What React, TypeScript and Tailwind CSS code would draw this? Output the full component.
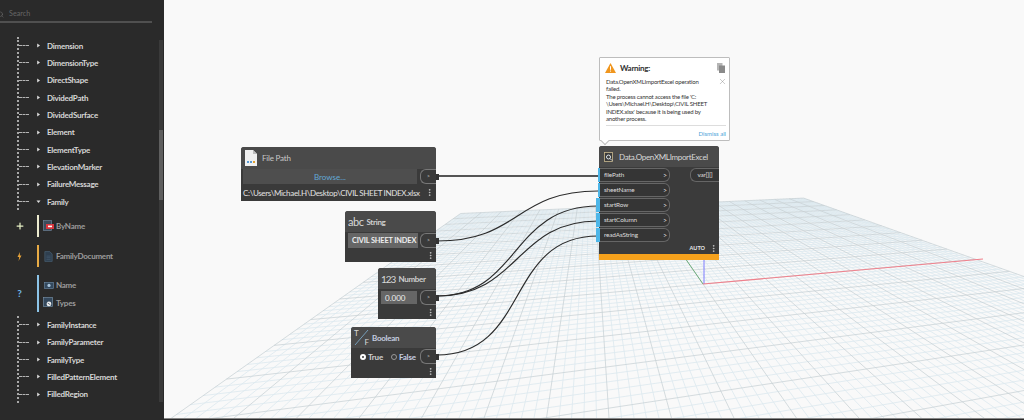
import { X, Plus, MoreVertical, Search } from "lucide-react";
import type { ReactNode } from "react";

// ground plane: square (-1..1) projected with two vanishing points
const VP_X = [2490, 122];
const VP_Y = [590, 122];
const ORIGIN = [703, 284];
const W1 = 0.18;
const W2 = 0.95;

function project(x: number, y: number) {
  const a = W1 * x;
  const b = W2 * y;
  const d = 1 + a + b;
  return [
    (a * VP_X[0] + b * VP_Y[0] + ORIGIN[0]) / d,
    (a * VP_X[1] + b * VP_Y[1] + ORIGIN[1]) / d,
  ];
}

function gridLines(major: boolean) {
  const out: string[] = [];
  const cutoff = -0.5;
  for (let i = -50; i <= 50; i++) {
    const isMajor = i % 5 === 0;
    if (isMajor !== major) continue;
    const t = i / 50;
    const y0 = Math.max(-1, (cutoff - W1 * t) / W2);
    const p = project(t, y0);
    const q = project(t, 1);
    out.push(`M${p[0].toFixed(1)} ${p[1].toFixed(1)}L${q[0].toFixed(1)} ${q[1].toFixed(1)}`);
    const x0 = Math.max(-1, (cutoff - W2 * t) / W1);
    if (x0 < 1) {
      const r = project(x0, t);
      const s = project(1, t);
      out.push(`M${r[0].toFixed(1)} ${r[1].toFixed(1)}L${s[0].toFixed(1)} ${s[1].toFixed(1)}`);
    }
  }
  return out.join("");
}

function Ground() {
  return (
    <svg className="absolute left-0 top-0" width={860} height={420} viewBox="164 0 860 420">
      <path d={gridLines(false)} stroke="#dce9ef" strokeWidth={0.8} fill="none" />
      <path d={gridLines(true)} stroke="#c4ced3" strokeWidth={0.7} fill="none" />
      <path d="M703 284L685 258" stroke="#6fae7c" strokeWidth={1} />
      <path d="M704 284L704 258" stroke="#7d7dff" strokeWidth={1} />
      <path d="M703 284L983 259" stroke="#f0808c" strokeWidth={1.2} />
      <path d="M437 176L598 176" stroke="#555555" strokeWidth={2} fill="none" />
      <path d="M437 241C520 241 515 191 598 191" stroke="#2b2b2b" strokeWidth={1.2} fill="none" />
      <path d="M437 296C520 296 510 206 598 206" stroke="#2b2b2b" strokeWidth={1.2} fill="none" />
      <path d="M437 296C520 296 515 221 598 221" stroke="#2b2b2b" strokeWidth={1.2} fill="none" />
      <path d="M437 355C530 355 505 236 598 236" stroke="#2b2b2b" strokeWidth={1.2} fill="none" />
    </svg>
  );
}

function Caret({ open }: { open?: boolean }) {
  return (
    <svg width="5" height="5" viewBox="0 0 5 5" className="shrink-0">
      {open ? <path d="M0.5 1.5H4.5L2.5 4Z" fill="#ddd" /> : <path d="M1.2 0.5V4.5L4 2.5Z" fill="#ddd" />}
    </svg>
  );
}

function TreeRow({ label, open }: { label: string; open?: boolean }) {
  return (
    <div className="flex h-[17.33px] items-center">
      <div className="w-[10px] border-t border-dashed border-[#b5b5b5]" />
      <div className="ml-[7px] mr-[6px] flex w-[5px]">
        <Caret open={open} />
      </div>
      <span className="text-[8px] font-bold tracking-[-0.25px] text-[#d6d6d6]">{label}</span>
    </div>
  );
}

function Tree({ items, openLast }: { items: string[]; openLast?: boolean }) {
  return (
    <div className="ml-[17px] border-l-2 border-dotted border-[#a8a8a8]">
      {items.map((it, i) => (
        <TreeRow key={it} label={it} open={openLast && i === items.length - 1} />
      ))}
    </div>
  );
}

function MethodRow({ icon, label }: { icon: ReactNode; label: string }) {
  return (
    <div className="flex h-[18px] items-center gap-[1px]">
      <div className="flex w-[13px] justify-center">{icon}</div>
      <span className="text-[8px] font-bold tracking-[-0.25px] text-[#9c9c9c]">{label}</span>
    </div>
  );
}

function MethodGroup({
  symbol,
  bar,
  height,
  children,
}: {
  symbol: ReactNode;
  bar: string;
  height: string;
  children: ReactNode;
}) {
  return (
    <div className={`flex items-center ${height}`}>
      <div className="flex w-[37px] justify-center pl-[2px]">{symbol}</div>
      <div className={`flex h-full w-[2px] ${bar}`} />
      <div className="flex flex-col pl-[3px]">{children}</div>
    </div>
  );
}

function ByNameIcon() {
  return (
    <svg width="12" height="12" viewBox="0 0 12 12">
      <rect x="0.5" y="0.5" width="8" height="10" fill="#3b4c5c" stroke="#6d8296" strokeWidth="0.7" />
      <rect x="3" y="4" width="8" height="5" fill="#d9363e" />
      <rect x="5" y="5.6" width="4" height="1.6" fill="#fff" />
    </svg>
  );
}

function DocIcon() {
  return (
    <svg width="9" height="11" viewBox="0 0 11 13">
      <path d="M1 .5H7L10 3.5V12.5H1Z" fill="#2f3f4f" stroke="#4a6278" strokeWidth="0.8" />
      <path d="M3 6H8M3 8H8M3 10H8" stroke="#4a6278" strokeWidth="0.7" />
    </svg>
  );
}

function NameIcon() {
  return (
    <svg width="10" height="8" viewBox="0 0 11 9">
      <rect x="0.5" y="1.5" width="10" height="7" fill="#33495e" stroke="#6d8ba6" strokeWidth="0.7" />
      <circle cx="5.5" cy="5" r="1.8" fill="#a9c4dc" />
    </svg>
  );
}

function TypesIcon() {
  return (
    <svg width="11" height="11" viewBox="0 0 12 12">
      <rect x="0.5" y="0.5" width="10" height="10" fill="#34485c" stroke="#7891a8" strokeWidth="0.7" />
      <circle cx="6.5" cy="7.5" r="2.6" fill="#eeeeee" />
      <path d="M5 6.5L8 8.5" stroke="#34485c" strokeWidth="0.8" />
    </svg>
  );
}

function Sidebar() {
  return (
    <aside className="relative flex h-full w-[164px] shrink-0 flex-col bg-[#2a2a2a]">
      <div className="mr-[12px] flex h-[23px] items-center border-b-2 border-[#505050] pt-[8px]">
        <Search size={7} strokeWidth={1.5} className="-ml-[3px] text-[#7a7a7a]" />
        <span className="ml-[5px] text-[7.2px] text-[#666666]">Search</span>
      </div>
      <div className="pt-[14px]">
        <Tree
          openLast
          items={[
            "Dimension",
            "DimensionType",
            "DirectShape",
            "DividedPath",
            "DividedSurface",
            "Element",
            "ElementType",
            "ElevationMarker",
            "FailureMessage",
            "Family",
          ]}
        />
      </div>
      <div className="flex flex-col gap-[8px] pt-[5px]">
        <MethodGroup
          bar="bg-[#ecebcf]"
          height="h-[22px]"
          symbol={<Plus size={10} strokeWidth={3} className="text-[#e6efc4]" />}
        >
          <MethodRow icon={<ByNameIcon />} label="ByName" />
        </MethodGroup>
        <MethodGroup
          bar="bg-[#e8ab45]"
          height="h-[22px]"
          symbol={
            <svg width="5" height="9" viewBox="0 0 5 9">
              <path d="M3 0L0.5 5H2.2L1.6 9L4.5 3.6H2.8Z" fill="#e8a43a" />
            </svg>
          }
        >
          <MethodRow icon={<DocIcon />} label="FamilyDocument" />
        </MethodGroup>
        <MethodGroup
          bar="bg-[#8cc4e8]"
          height="h-[37px]"
          symbol={<span className="text-[10px] font-bold text-[#6fb6e6]">?</span>}
        >
          <MethodRow icon={<NameIcon />} label="Name" />
          <MethodRow icon={<TypesIcon />} label="Types" />
        </MethodGroup>
      </div>
      <div className="pt-[4px]">
        <Tree items={["FamilyInstance", "FamilyParameter", "FamilyType", "FilledPatternElement", "FilledRegion"]} />
      </div>
      {/* scrollbar */}
      <div className="absolute bottom-[18px] right-[1px] top-[40px] w-[4px] bg-[#3a3a3a]">
        <div className="mt-[90px] h-[70px] w-full bg-[#5f5f5f]" />
      </div>
    </aside>
  );
}

function OutPort() {
  return (
    <div className="relative flex h-[15px] w-[16px] shrink-0 items-center justify-center rounded-l-[6px] border border-r-0 border-[#777777] bg-[#3a3a3a] text-[5px] text-[#cccccc]">
      &gt;
      <div className="absolute right-[-3px] top-[4px] h-[6px] w-[3px] bg-[#333333]" />
    </div>
  );
}

function Dots() {
  return <MoreVertical size={9} strokeWidth={2} className="shrink-0 text-[#cfcfcf]" />;
}

function FilePathNode() {
  return (
    <div className="absolute left-[77px] top-[147px] flex h-[54px] w-[195px] flex-col rounded-t-[3px] bg-[#3a3a3a]">
      <div className="flex h-[22px] items-center gap-[5px] rounded-t-[3px] bg-[#4a4a4a] pl-[4px]">
        <svg width="12" height="16" viewBox="0 0 12 16">
          <path d="M0 0H8L12 4V16H0Z" fill="#f0f0f0" />
          <path d="M8 0L12 4H8Z" fill="#bdbdbd" />
          <rect x="2" y="11" width="2" height="2" fill="#5a9bd5" />
          <rect x="5" y="11" width="2" height="2" fill="#5a9bd5" />
          <rect x="8" y="11" width="2" height="2" fill="#e0a030" />
        </svg>
        <span className="text-[8px] tracking-[-0.2px] text-[#c8c8c8]">File Path</span>
      </div>
      <div className="flex h-[15px] items-center pl-[2px]">
        <div className="flex h-[15px] w-[174px] items-center justify-center bg-[#4e4e4e] text-[8px] text-[#63a9d6]">
          Browse...
        </div>
        <div className="ml-auto">
          <OutPort />
        </div>
      </div>
      <div className="flex flex-1 items-center justify-between pl-[2px] pr-[2px]">
        <span className="whitespace-nowrap text-[8px] tracking-[-0.33px] text-[#e2e2e2]">C:\Users\Michael.H\Desktop\CIVIL SHEET INDEX.xlsx</span>
        <Dots />
      </div>
    </div>
  );
}

function InputNode({
  pos,
  icon,
  title,
  titleClass,
  children,
}: {
  pos: string;
  icon: ReactNode;
  title: string;
  titleClass?: string;
  children: ReactNode;
}) {
  return (
    <div className={`absolute flex h-[51px] flex-col rounded-t-[3px] bg-[#3a3a3a] ${pos}`}>
      <div className="flex h-[21px] items-center gap-[3px] rounded-t-[3px] bg-[#4a4a4a] pl-[3px]">
        {icon}
        <span className={`text-[8px] font-bold tracking-[-0.3px] ${titleClass ?? "text-[#cfcfcf]"}`}>{title}</span>
      </div>
      <div className="flex h-[16px] items-center justify-between pl-[3px] pt-[1px]">
        {children}
        <OutPort />
      </div>
      <div className="flex flex-1 items-center justify-end pr-[1px]">
        <Dots />
      </div>
    </div>
  );
}

function InPort({ label, wide }: { label: string; wide?: boolean }) {
  return (
    <div className="relative h-[15px]">
      <div className="flex h-[14px] w-[71px] items-center justify-between rounded-r-[6px] border border-l-0 border-[#666666] bg-[#353535] pl-[5px] pr-[2px] text-[6.4px] tracking-[-0.15px] text-[#dddddd]">
        <span>{label}</span>
        <span className="text-[7px]">&gt;</span>
      </div>
      <div className={`absolute bottom-[1px] right-[70px] top-0 bg-[#4db6e8] ${wide ? "w-[4px]" : "w-[2px]"}`} />
    </div>
  );
}

function ImportNode() {
  return (
    <div className="absolute left-[435px] top-[146px] flex h-[114px] w-[120px] flex-col rounded-t-[3px] bg-[#3b3b3b]">
      <div className="flex h-[21px] items-center gap-[6px] rounded-t-[3px] bg-[#4a4a4a] pl-[5px]">
        <svg width="9" height="10" viewBox="0 0 9 10" className="shrink-0">
          <rect x="0.5" y="0.5" width="8" height="9" fill="#3a3a3a" stroke="#c9b88f" strokeWidth="0.8" />
          <circle cx="4.5" cy="5" r="2" fill="none" stroke="#dfe8ef" strokeWidth="1" />
          <path d="M6 6.5L8 8.5" stroke="#dfe8ef" strokeWidth="1" />
        </svg>
        <span className="text-[8px] tracking-[-0.33px] text-[#d8d8d8]">Data.OpenXMLImportExcel</span>
      </div>
      <div className="flex items-start justify-between pt-[1px]">
        <div className="flex flex-col">
          <InPort label="filePath" />
          <InPort label="sheetName" />
          <InPort label="startRow" wide />
          <InPort label="startColumn" wide />
          <InPort label="readAsString" wide />
        </div>
        <div className="flex h-[14px] w-[29px] items-center justify-center rounded-l-[6px] border border-r-0 border-[#666666] bg-[#353535] text-[6.4px] tracking-[-0.2px] text-[#dddddd]">
          var[][]
        </div>
      </div>
      <div className="flex flex-1 items-center justify-end gap-[4px] pr-[1px]">
        <span className="text-[5.5px] font-bold text-[#e8e8e8]">AUTO</span>
        <Dots />
      </div>
      <div className="h-[6px] bg-[#f5a11c]" />
    </div>
  );
}

function WarningBubble() {
  return (
    <div className="absolute left-[435px] top-[57px] flex h-[84px] w-[131px] flex-col rounded-[1px] border border-[#bdbdbd] bg-white px-[6px]">
      <div className="flex h-[20px] items-center">
        <svg width="11" height="10" viewBox="0 0 11 10" className="-ml-[1px]">
          <path d="M5.5 0L11 10H0Z" fill="#f0961e" />
          <rect x="5" y="3.2" width="1" height="3.6" fill="#fff" />
          <rect x="5" y="7.6" width="1" height="1" fill="#fff" />
        </svg>
        <span className="ml-[4px] text-[8px] font-bold tracking-[-0.3px] text-[#333333]">Warning:</span>
        <svg width="8" height="10" viewBox="0 0 8 10" className="ml-auto mr-[-2px]">
          <rect x="0" y="0" width="5.5" height="7.5" fill="#b5b5b5" />
          <rect x="2" y="2.5" width="6" height="7.5" fill="#8a8a8a" />
        </svg>
      </div>
      <div className="relative h-[44px]">
        <p className="whitespace-nowrap text-[6px] leading-[7.4px] tracking-[-0.2px] text-[#333333]">
          Data.OpenXMLImportExcel operation
          <br />
          failed.
          <br />
          The process cannot access the file 'C:
          <br />
          \Users\Michael.H\Desktop\CIVIL SHEET
          <br />
          INDEX.xlsx' because it is being used by
          <br />
          another process.
        </p>
        <X size={9} strokeWidth={1} className="absolute right-[-4px] top-[-1px] text-[#777777]" />
      </div>
      <div className="mr-[-3px] mt-[3px] flex flex-1 items-center justify-end border-t border-[#dddddd] text-[6px] text-[#4ba3d8]">
        Dismiss all
      </div>
      <div className="absolute bottom-[-4px] left-[2px] h-[6px] w-[6px] rotate-45 border-b border-r border-[#bdbdbd] bg-white" />
    </div>
  );
}

function Canvas() {
  return (
    <main className="relative h-full flex-1 overflow-hidden bg-[#f9f9f9]">
      <Ground />
      <FilePathNode />
      <InputNode
        pos="left-[181px] top-[211px] w-[91px]"
        title="String"
        icon={<span className="text-[11px] leading-none tracking-[-0.5px] text-[#d8d8d8]">abc</span>}
      >
        <div className="flex h-[15px] w-[70px] items-center overflow-hidden whitespace-nowrap bg-[#666666] pl-[4px] text-[7.4px] font-bold tracking-[-0.15px] text-[#eeeeee]">
          CIVIL SHEET INDEX
        </div>
      </InputNode>
      <InputNode
        pos="left-[214px] top-[268px] w-[58px]"
        title="Number"
        icon={<span className="text-[10px] leading-none tracking-[-1px] text-[#d8d8d8]">123</span>}
      >
        <div className="flex h-[13px] w-[36px] items-center bg-[#666666] pl-[4px] text-[8px] text-[#eeeeee]">0.000</div>
      </InputNode>
      <InputNode
        pos="left-[187px] top-[327px] w-[85px]"
        title="Boolean"
        titleClass="text-[#c5cde0]"
        icon={
          <div className="relative h-[17px] w-[15px] text-[8px] leading-none text-[#d8d8d8]">
            <span className="absolute left-0 top-0">T</span>
            <span className="absolute bottom-0 right-0">F</span>
            <svg className="absolute inset-0" width="15" height="17" viewBox="0 0 15 17">
              <path d="M1 16L14 1" stroke="#7fb2d6" strokeWidth="0.8" />
            </svg>
          </div>
        }
      >
        <div className="flex items-center gap-[2px] pl-[6px] text-[8px] font-bold tracking-[-0.2px] text-[#d0d0d0]">
          <span className="h-[6px] w-[6px] rounded-full border-2 border-white bg-[#3a3a3a]" />
          <span className="mr-[6px]">True</span>
          <span className="h-[6px] w-[6px] rounded-full border border-[#999999]" />
          <span className="text-[#c5cde0]">False</span>
        </div>
      </InputNode>
      <WarningBubble />
      <ImportNode />
      <div className="absolute bottom-0 left-0 right-0 h-[2px] border-t border-[#888888] bg-[#2a2a2a]" />
    </main>
  );
}

export default function App() {
  return (
    <div className="flex h-[420px] w-[1024px] overflow-hidden font-['Lato',sans-serif]">
      <Sidebar />
      <Canvas />
    </div>
  );
}
